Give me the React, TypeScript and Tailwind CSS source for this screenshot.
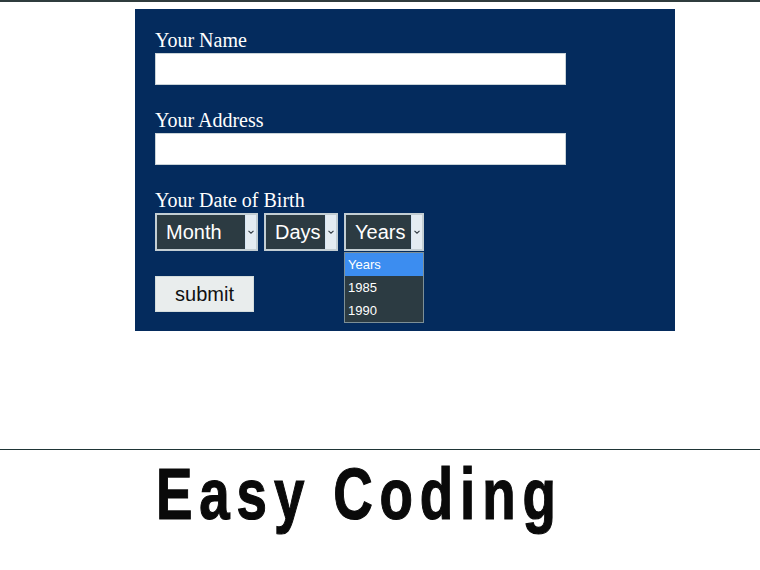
import React from "react";

const Chevron = () => (
  <svg width="6" height="4" viewBox="0 0 6 4" className="block">
    <path d="M0.5 0.8 L3 3.2 L5.5 0.8" fill="none" stroke="#333c44" strokeWidth="1.1" />
  </svg>
);

function Select({ label, w, textPad }: { label: string; w: string; textPad: string }) {
  return (
    <div className={`${w} h-[38px] flex border border-[#c3ced3] bg-[#c3ced3] p-px`}>
      <div className={`flex-1 bg-[#2c3b42] flex items-center ${textPad} text-white text-[20px] [font-family:'Liberation_Sans',Arial,sans-serif]`}>
        {label}
      </div>
      <div className="w-[11px] bg-[#e4ecf2] border-l border-[#d7e6f5] flex items-center justify-center">
        <Chevron />
      </div>
    </div>
  );
}

export default function App() {
  return (
    <div className="w-[760px] h-[570px] bg-white overflow-hidden relative">
      <div className="h-[2px] bg-[#2f3c3d]" />
      <div className="ml-[135px] mt-[7px] w-[540px] h-[322px] bg-[#042b5d] pt-[20px] pl-[20px] [font-family:'Liberation_Serif','Times_New_Roman',serif] text-white">
        <div className="text-[20px] leading-[22px]">Your Name</div>
        <div className="mt-[2px] w-[411px] h-[32px] bg-white border border-[#c9d3d8]" />
        <div className="mt-[24px] text-[20px] leading-[22px]">Your Address</div>
        <div className="mt-[2px] w-[411px] h-[32px] bg-white border border-[#c9d3d8]" />
        <div className="mt-[24px] text-[20px] leading-[22px]">Your Date of Birth</div>
        <div className="mt-[2px] flex gap-[6px]">
          <Select label="Month" w="w-[103px]" textPad="pl-[9px]" />
          <Select label="Days" w="w-[74px]" textPad="pl-[9px]" />
          <div className="relative">
            <Select label="Years" w="w-[80px]" textPad="pl-[9px]" />
            <div className="absolute left-0 top-[39px] w-[80px] bg-[#2c3b42] border border-[#7d8f96] [font-family:'Liberation_Sans',Tahoma,sans-serif] text-[13px] text-white">
              <div className="h-[23px] bg-[#3c8df0] pl-[3px] flex items-center">Years</div>
              <div className="h-[23px] pl-[3px] flex items-center">1985</div>
              <div className="h-[23px] pl-[3px] flex items-center">1990</div>
            </div>
          </div>
        </div>
        <div className="mt-[25px] w-[99px] h-[36px] bg-[#e9eded] border border-[#d4dcdc] flex items-center justify-center text-[20px] text-[#111] [font-family:'Liberation_Sans',Arial,sans-serif]">
          submit
        </div>
      </div>
      <div className="mt-[118px] h-px bg-[#1f3536]" />
      <div className="mt-[8px] pl-[156px]">
        <div className="inline-block origin-left scale-x-[0.76] text-[72px] leading-[72px] font-bold tracking-[9px] text-[#0a0a0a] whitespace-nowrap [-webkit-text-stroke:1.2px_#0a0a0a] [font-family:'Liberation_Sans',Arial,sans-serif]">
          Easy Coding
        </div>
      </div>
    </div>
  );
}
